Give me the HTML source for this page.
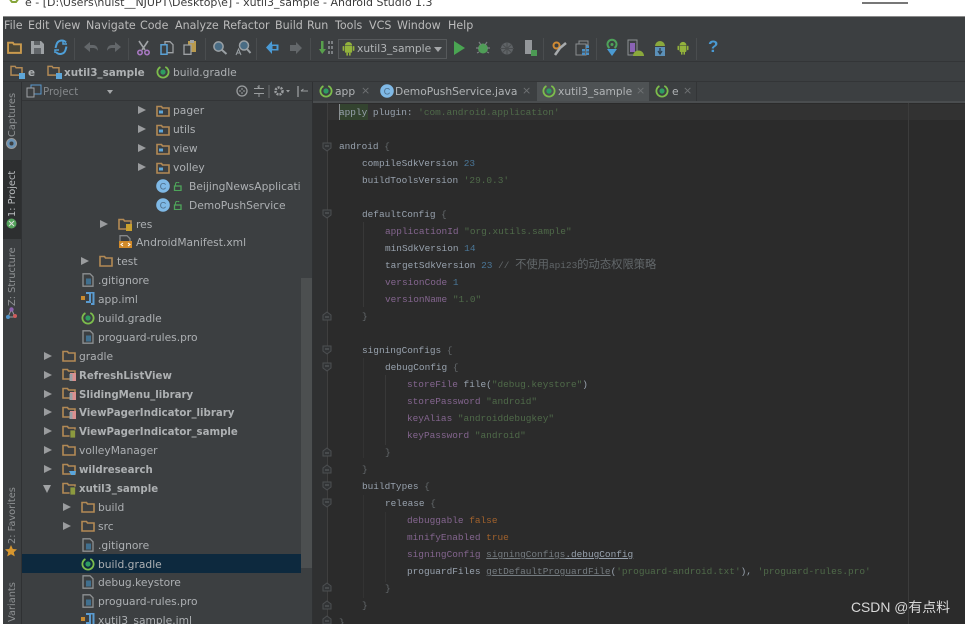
<!DOCTYPE html>
<html><head><meta charset="utf-8">
<style>
html,body{margin:0;padding:0;background:#fff;width:967px;height:624px;overflow:hidden}
#root{position:absolute;left:0;top:0;width:967px;height:624px;overflow:hidden;filter:blur(.35px);font-family:"DejaVu Sans","Noto Sans CJK SC",sans-serif}
.a{position:absolute;white-space:nowrap}
.m{top:18px;font-size:11.1px;color:#bbbbbb;line-height:16px}
.t{font-size:10.7px;color:#adb0b3;line-height:16px;margin-top:1px}
.b{font-weight:bold;font-size:10.2px;color:#aeb1b3}
.v{font-size:9.8px;color:#8f9294;transform-origin:0 0;transform:rotate(-90deg);line-height:14px}
.c{font-family:"Liberation Mono","Noto Sans CJK SC",monospace;font-size:9.43px;line-height:14px;color:#98a2ae;left:0;margin-top:1px}
.k{color:#84658f}.s{color:#4f6a49}.n{color:#4a7697}.o{color:#a0612c}.g{color:#62676a}.u{text-decoration:underline;color:#757c81}
.z{font-size:11.3px}
svg{position:absolute;overflow:visible}
.arr{width:0;height:0;border-left:8px solid #9a9c9e;border-top:4px solid transparent;border-bottom:4px solid transparent}
.x{color:#6f7274;font-size:11px;margin-top:1px}
.sep{width:1px;background:#4a4d4f;top:38px;height:22px}
</style></head><body>
<svg width="0" height="0" style="position:absolute">
<defs>
<symbol id="fo" viewBox="0 0 14 12"><path d="M1 1.5h4.5l1 1.5H13v8H1z" fill="#3c3f41" stroke="#b38a55" stroke-width="1.6"/></symbol>
<symbol id="pk" viewBox="0 0 14 12"><path d="M1 1.5h4.5l1 1.5H13v8H1z" fill="#3c3f41" stroke="#b38a55" stroke-width="1.6"/><rect x="3" y="5.5" width="4" height="3" fill="#5ea6d8"/></symbol>
<symbol id="mod" viewBox="0 0 14 13"><path d="M1 1.5h4.5l1 1.5H13v8H1z" fill="#3c3f41" stroke="#b38a55" stroke-width="1.6"/><rect x="8" y="5" width="6" height="8" fill="#d98f8f"/><rect x="7.5" y="6" width="3" height="7" fill="#9aa0a5"/></symbol>
<symbol id="and" viewBox="0 0 14 13"><path d="M1 1.5h4.5l1 1.5H13v8H1z" fill="#3c3f41" stroke="#b38a55" stroke-width="1.6"/><rect x="8" y="5" width="5.5" height="8" fill="#8c9a3f" stroke="#3c3f41" stroke-width=".8"/></symbol>
<symbol id="gr" viewBox="0 0 14 14"><circle cx="7" cy="7" r="5.6" fill="none" stroke="#7cbd4c" stroke-width="1.8" stroke-dasharray="26 5" transform="rotate(-25 7 7)"/><circle cx="7" cy="7" r="2.6" fill="#2e9c62"/></symbol>
<symbol id="cl" viewBox="0 0 14 14"><circle cx="7" cy="7" r="6.8" fill="#7fb9e6"/><text x="7" y="10.3" font-size="9" text-anchor="middle" fill="#4d6d88" font-family="Liberation Sans">C</text></symbol>
<symbol id="lock" viewBox="0 0 9 9"><rect x="1.5" y="4" width="6.5" height="4.6" fill="none" stroke="#4ea55a" stroke-width="1.3"/><path d="M2.5 4V2a2 2 0 0 1 3.6-1" fill="none" stroke="#4ea55a" stroke-width="1.1"/></symbol>
<symbol id="file" viewBox="0 0 12 14"><path d="M1 .8h7l3 3v9.4H1z" fill="#3c3f41" stroke="#8d9092" stroke-width="1.3"/><rect x="4" y="5.5" width="5" height="6" fill="#41708f"/></symbol>
<symbol id="iml" viewBox="0 0 14 13"><rect x="0" y="4" width="4" height="4" fill="#c98a2e"/><path d="M5 1h4v9H5M10 .5h2.5V12H10" fill="none" stroke="#5a9bd0" stroke-width="2"/></symbol>
<symbol id="dr" viewBox="0 0 14 14"><path d="M3.6 4.6h6.8V10a1 1 0 0 1-1 1H4.600a1 1 0 0 1-1-1zM3.600 4.100a3.400 3.200 0 0 1 6.800 0z" fill="#93b33c"/><rect x="1.500" y="4.700" width="1.500" height="4.500" rx=".7" fill="#93b33c"/><rect x="11" y="4.700" width="1.500" height="4.500" rx=".7" fill="#93b33c"/><rect x="5" y="11" width="1.500" height="2.600" fill="#93b33c"/><rect x="7.500" y="11" width="1.500" height="2.600" fill="#93b33c"/></symbol>
<symbol id="fold" viewBox="0 0 10 10"><path d="M1 1h8v5L5 9 1 6z" fill="#313335" stroke="#4c4f51" stroke-width="1"/><path d="M3 4h4" stroke="#606365" stroke-width="1"/></symbol>
<symbol id="foldu" viewBox="0 0 10 10"><path d="M1 9h8V4L5 1 1 4z" fill="#313335" stroke="#4c4f51" stroke-width="1"/><path d="M3 6h4" stroke="#606365" stroke-width="1"/></symbol>
</defs></svg>
<div id="root">
<!-- title bar -->
<div class="a" style="left:25px;top:-4px;font-size:11px;color:#3a3a3a;line-height:14px;font-family:'DejaVu Sans','Noto Sans CJK SC',sans-serif">e - [D:\Users\hulst__NJUPT\Desktop\e] - xutil3_sample - Android Studio 1.3</div>
<svg style="left:8px;top:-2px" width="12" height="7"><path d="M1 0l3 4h4l3-4" fill="none" stroke="#86a53a" stroke-width="2"/></svg>
<div class="a" style="left:862px;top:2px;width:46px;height:2px;background:#777"></div>
<!-- window -->
<div class="a" style="left:3px;top:16px;width:962px;height:608px;background:#3c3f41"></div>
<div class="a" style="left:3px;top:16px;width:962px;height:1px;background:#8a8a8a"></div>
<div class="m a" style="left:4px">File</div>
<div class="m a" style="left:28px">Edit</div>
<div class="m a" style="left:54px">View</div>
<div class="m a" style="left:86px">Navigate</div>
<div class="m a" style="left:140px">Code</div>
<div class="m a" style="left:175px">Analyze</div>
<div class="m a" style="left:223px">Refactor</div>
<div class="m a" style="left:275px">Build</div>
<div class="m a" style="left:307px">Run</div>
<div class="m a" style="left:335px">Tools</div>
<div class="m a" style="left:369px">VCS</div>
<div class="m a" style="left:397px">Window</div>
<div class="m a" style="left:448px">Help</div>
<!-- toolbar icons -->
<svg style="left:7px;top:41px" width="15" height="13" viewBox="0 0 14 12"><path d="M1 1.500h4.500l1 1.500H13v8H1z" fill="#4a4535" stroke="#c99a4e" stroke-width="1.800"/></svg>
<svg style="left:31px;top:41px" width="13" height="13"><path d="M0 0h10l3 3v10H0z" fill="#9da1a4"/><rect x="3" y="0" width="6" height="4" fill="#5f6366"/><rect x="3" y="7" width="7" height="6" fill="#62666a"/></svg>
<svg style="left:54px;top:40px" width="14" height="15" fill="none" stroke="#4e9fd8" stroke-width="2"><path d="M12 2.500a5.500 5.500 0 0 0-9.500 2L1.500 8M2 12a5.500 5.500 0 0 0 9.500-2l1-3.500"/><path d="M9 0v4h4M1 13v-3h4" stroke-width="1.500"/></svg>
<svg style="left:84px;top:42px" width="14" height="11"><path d="M6 0v3h3c3 0 5 2 5 6-1-2-3-3-5-3H6v4L0 5z" fill="#63676a"/></svg>
<svg style="left:107px;top:42px" width="14" height="11"><path d="M8 0v3H5C2 3 0 5 0 9c1-2 3-3 5-3h3v4l6-5z" fill="#63676a"/></svg>
<svg style="left:137px;top:41px" width="13" height="14" fill="none" stroke="#a0a3a6"><path d="M2 0l6 9M11 0L5 9" stroke-width="1.600"/><circle cx="3" cy="11.500" r="2.200" stroke="#a878c2" stroke-width="1.600"/><circle cx="10" cy="11.500" r="2.200" stroke="#a878c2" stroke-width="1.600"/></svg>
<svg style="left:160px;top:41px" width="14" height="14" fill="#3c3f41"><path d="M5 .7h5l3 3v8H5z" stroke="#9da0a3" stroke-width="1.300"/><path d="M1 3.700h6v9.500H1z" stroke="#5aa0d4" stroke-width="1.500"/></svg>
<svg style="left:183px;top:40px" width="14" height="15"><path d="M5 1h8v11H5z" fill="#b99a4e"/><rect x="7" y="0" width="4" height="3" fill="#a0a3a6"/><path d="M1 5h7v9.300H1z" fill="#3c3f41" stroke="#9da0a3" stroke-width="1.300"/></svg>
<svg style="left:213px;top:41px" width="14" height="14" fill="none"><circle cx="5.500" cy="5.500" r="4.600" fill="#496c84" stroke="#9aa0a4" stroke-width="1.500"/><path d="M9 9l4.500 4" stroke="#9aa0a4" stroke-width="2"/></svg>
<svg style="left:236px;top:40px" width="15" height="16" fill="none"><circle cx="8" cy="5.500" r="4.500" fill="#496c84" stroke="#9aa0a4" stroke-width="1.500"/><path d="M11 9l3.500 4" stroke="#9aa0a4" stroke-width="2"/><path d="M0 15l2.500-6 2.500 6M1 13h3" stroke="#9aa0a4"/></svg>
<svg style="left:266px;top:41px" width="13" height="13"><path d="M6 0v3.500h6.500v6H6V13L0 6.500z" fill="#4a9bd6"/><rect x="6.500" y="5" width="4" height="3" fill="#3c3f41"/></svg>
<svg style="left:290px;top:42px" width="12" height="12"><path d="M6 0v3H0v6h6v3l6-6z" fill="#63676a"/></svg>
<svg style="left:319px;top:41px" width="14" height="14"><path d="M2 0h2.500v8H7L3.200 13 0 8h2z" fill="#58a04c"/><g fill="#7b7f82"><rect x="9" y="0" width="2" height="3"/><rect x="12" y="0" width="2" height="3"/><rect x="9" y="5" width="2" height="3"/><rect x="12" y="5" width="2" height="3"/><rect x="9" y="10" width="2" height="3"/><rect x="12" y="10" width="2" height="3"/></g></svg>
<div class="a" style="left:338px;top:39px;width:109px;height:20px;border:1px solid #56595b;box-sizing:border-box;background:#3f4244"></div>
<svg style="left:341px;top:41px" width="15" height="15"><use href="#dr" width="15" height="15"/></svg>
<div class="a" style="left:357px;top:41px;font-size:10.700px;line-height:16px;color:#b2b5b7">xutil3_sample</div>
<div class="a" style="left:434px;top:47px;border-top:5px solid #a5a7a9;border-left:4.500px solid transparent;border-right:4.500px solid transparent"></div>
<svg style="left:454px;top:41px" width="11" height="14"><path d="M0 0l11 7-11 7z" fill="#4aa552"/></svg>
<svg style="left:476px;top:41px" width="15" height="14"><circle cx="7" cy="7.500" r="5" fill="#4f9d57"/><path d="M3 1l2 3M11 1L9 4M0 7h3M11 7h3M1 12l2-1M13 12l-2-1" stroke="#7b7f82" stroke-width="1.200"/></svg>
<svg style="left:500px;top:42px" width="14" height="13"><circle cx="7" cy="6.500" r="6" fill="#5f6366"/><path d="M0 6.500h14M7 0v13M2 2l10 9M12 2L2 11" stroke="#4a4d4f"/></svg>
<svg style="left:525px;top:40px" width="12" height="16"><rect x="0" y="0" width="7" height="14" fill="#94979a"/><rect x="6" y="10" width="6" height="6" fill="#4c9a54"/></svg>
<svg style="left:552px;top:41px" width="15" height="15" fill="none"><circle cx="4.500" cy="4.500" r="3" stroke="#d08a33" stroke-width="2"/><path d="M14 2l-6 5-5 7" stroke="#a8abad" stroke-width="2.500"/></svg>
<svg style="left:576px;top:41px" width="15" height="14"><rect x="3" y="0" width="9" height="4" fill="none" stroke="#8a8d90"/><rect x="0" y="3" width="10" height="11" fill="#3c3f41" stroke="#8a8d90"/><g fill="#4a90c6"><rect x="6" y="8" width="3" height="2.500"/><rect x="10" y="8" width="3" height="2.500"/><rect x="6" y="11.500" width="3" height="2.500"/><rect x="10" y="11.500" width="3" height="2.500"/><rect x="10" y="4.500" width="3" height="2.500"/></g></svg>
<svg style="left:606px;top:40px" width="12" height="16"><path d="M3.500 8a4.500 4.500 0 1 1 5 0" fill="none" stroke="#4ea25a" stroke-width="2"/><circle cx="6" cy="4.500" r="1.500" fill="#4ea25a"/><path d="M1 9h10l-5 7z" fill="#4a9ad2"/></svg>
<svg style="left:628px;top:40px" width="16" height="16"><rect x="0" y="0" width="9" height="15" fill="#3c3f41" stroke="#8d9092"/><rect x="2" y="3" width="5" height="9" fill="#8a63b5"/><path d="M5 16a4.500 4.500 0 0 1 11 0z" fill="#8aa83c"/></svg>
<svg style="left:654px;top:40px" width="12" height="16"><path d="M1 6a5 5 0 0 1 10 0z" fill="#8aa83c"/><rect x="1" y="7" width="10" height="9" fill="#5b90b8"/><path d="M6 8v5M4 11l2 3 2-3" stroke="#2d3e4c" stroke-width="1.300" fill="none"/></svg>
<svg style="left:676px;top:41px" width="14" height="14"><use href="#dr" width="14" height="14"/></svg>
<div class="a" style="left:708px;top:36px;font-size:17px;font-weight:bold;color:#4a9ad2;line-height:22px;font-family:'Liberation Sans',sans-serif">?</div>
<div class="a sep" style="left:74px"></div><div class="a sep" style="left:128px"></div><div class="a sep" style="left:205px"></div><div class="a sep" style="left:256px"></div><div class="a sep" style="left:310px"></div><div class="a sep" style="left:543px"></div><div class="a sep" style="left:596px"></div><div class="a sep" style="left:696px"></div>
<!-- breadcrumb -->
<div class="a" style="left:3px;top:61px;width:962px;height:1px;background:#333537"></div>
<div class="a" style="left:3px;top:81px;width:962px;height:1px;background:#333537"></div>
<svg style="left:10px;top:65px" width="15" height="14"><use href="#fo" width="13" height="11"/><rect x="9" y="8" width="6" height="6" fill="#5ea6d8"/></svg>
<div class="a b" style="left:28px;top:65px;line-height:16px;font-size:10.400px">e</div>
<svg style="left:47px;top:65px" width="15" height="14"><use href="#fo" width="13" height="11"/><rect x="9" y="8" width="6" height="6" fill="#5ea6d8"/></svg>
<div class="a b" style="left:64px;top:65px;line-height:16px;font-size:10.400px">xutil3_sample</div>
<svg style="left:156px;top:65px" width="14" height="14"><use href="#gr" width="14" height="14"/></svg>
<div class="a t" style="left:173px;top:64px">build.gradle</div>
<!-- left stripe -->
<div class="a" style="left:21px;top:82px;width:1px;height:542px;background:#2f3133"></div>
<div class="a" style="left:3px;top:160px;width:18px;height:79px;background:#2d2f30"></div>
<div class="a v" style="left:6px;top:137px">Captures</div>
<div class="a v" style="left:6px;top:217px;color:#b8bbbd">1: Project</div>
<div class="a v" style="left:6px;top:306px">Z: Structure</div>
<div class="a v" style="left:6px;top:544px">2: Favorites</div>
<div class="a v" style="left:6px;top:622px">Variants</div>
<svg style="left:6px;top:138px" width="11" height="11"><circle cx="5.500" cy="5.500" r="5" fill="#6a93b5" stroke="#999"/><circle cx="5.500" cy="5.500" r="2" fill="#3c3f41"/></svg>
<svg style="left:6px;top:218px" width="11" height="11"><circle cx="5.500" cy="5.500" r="5" fill="#55a35c"/><path d="M3 3l5 5M8 3L3 8" stroke="#ddd"/></svg>
<svg style="left:6px;top:307px" width="11" height="13"><path d="M5.500 2L2 10h7z" fill="none" stroke="#9a9d9f"/><circle cx="5.500" cy="2.500" r="2.200" fill="#8b63ad"/><circle cx="2" cy="10" r="2" fill="#4f93c9"/><circle cx="9" cy="9" r="2" fill="#cc5c5c"/></svg>
<svg style="left:5px;top:545px" width="12" height="12"><path d="M6 0l1.800 4 4.200.4-3.200 2.800 1 4.200L6 9.200 2.200 11.400l1-4.200L0 4.400 4.200 4z" fill="#d8972f"/></svg>
<!-- project panel -->
<div class="a" style="left:22px;top:82px;width:291px;height:18px;background:#3c3f41"></div>
<div class="a" style="left:22px;top:100px;width:291px;height:1px;background:#333537"></div>
<svg style="left:27px;top:85px" width="14" height="13"><rect x="4" y="0" width="10" height="9" fill="#3c3f41" stroke="#5a9ad0"/><rect x="0" y="3" width="7" height="9" fill="#3c3f41" stroke="#a0a3a6"/></svg>
<div class="a" style="left:43px;top:84px;font-size:10.300px;line-height:16px;color:#85888b">Project</div>
<div class="a" style="left:107px;top:90px;border-top:4px solid #a5a7a9;border-left:3.500px solid transparent;border-right:3.500px solid transparent"></div>
<svg style="left:236px;top:85px" width="76" height="13" fill="none" stroke="#9a9d9f"><circle cx="6" cy="6" r="5" stroke-width="1.300"/><path d="M6 3v6M3 6h6" stroke-dasharray="2 2"/><path d="M18 3.500h10M18 8.500h10M23 0v3l-1.500-1.500M23 12V9" /><path d="M33 0v13" stroke="#6a6d70"/><circle cx="43" cy="6" r="3.500" stroke-width="2.500" stroke-dasharray="2 1"/><path d="M50 5h4l-2 2.500z" fill="#9a9d9f" stroke="none"/><path d="M62 1v11" stroke-width="1.300"/><path d="M65 6h7M65 6l2.500-2" /></svg>
<!-- selected row -->
<div class="a" style="left:22px;top:554px;width:279px;height:19px;background:#0d293e"></div>
<!-- tree -->
<div class="a arr" style="left:138px;top:106px"></div><svg style="left:156px;top:105px" width="14" height="12"><use href="#pk"/></svg><div class="a t" style="left:173px;top:102px">pager</div>
<div class="a arr" style="left:138px;top:125px"></div><svg style="left:156px;top:124px" width="14" height="12"><use href="#pk"/></svg><div class="a t" style="left:173px;top:121px">utils</div>
<div class="a arr" style="left:138px;top:144px"></div><svg style="left:156px;top:143px" width="14" height="12"><use href="#pk"/></svg><div class="a t" style="left:173px;top:140px">view</div>
<div class="a arr" style="left:138px;top:163px"></div><svg style="left:156px;top:162px" width="14" height="12"><use href="#pk"/></svg><div class="a t" style="left:173px;top:159px">volley</div>
<svg style="left:156px;top:179px" width="14" height="14"><use href="#cl"/></svg><svg style="left:173px;top:182px" width="9" height="9"><use href="#lock"/></svg>
<div class="a t" style="left:189px;top:178px;width:112px;overflow:hidden">BeijingNewsApplication</div>
<svg style="left:156px;top:198px" width="14" height="14"><use href="#cl"/></svg><svg style="left:173px;top:201px" width="9" height="9"><use href="#lock"/></svg>
<div class="a t" style="left:189px;top:197px">DemoPushService</div>
<div class="a arr" style="left:100px;top:220px"></div><svg style="left:118px;top:218px" width="15" height="13"><use href="#fo" width="14" height="12"/><rect x="8" y="6" width="6" height="7" fill="#c9a02e"/></svg><div class="a t" style="left:136px;top:216px">res</div>
<svg style="left:119px;top:235px" width="14" height="14"><path d="M1 .7h7l3 3v3H1z" fill="#3c3f41" stroke="#85888a" stroke-width="1.300"/><rect x="0" y="6" width="13" height="7" fill="#d18a2a"/><path d="M4 8l-2 1.500L4 11M9 8l2 1.500L9 11" stroke="#fff" fill="none"/></svg><div class="a t" style="left:136px;top:234px">AndroidManifest.xml</div>
<div class="a arr" style="left:81px;top:257px"></div><svg style="left:99px;top:255px" width="14" height="12"><use href="#fo"/></svg><div class="a t" style="left:117px;top:253px">test</div>
<svg style="left:82px;top:273px" width="12" height="14"><use href="#file"/></svg><div class="a t" style="left:98px;top:272px">.gitignore</div>
<svg style="left:81px;top:292px" width="14" height="13"><use href="#iml"/></svg><div class="a t" style="left:98px;top:291px">app.iml</div>
<svg style="left:81px;top:311px" width="14" height="14"><use href="#gr"/></svg><div class="a t" style="left:98px;top:310px">build.gradle</div>
<svg style="left:82px;top:330px" width="12" height="14"><use href="#file"/></svg><div class="a t" style="left:98px;top:329px">proguard-rules.pro</div>
<div class="a arr" style="left:44px;top:352px"></div><svg style="left:62px;top:350px" width="14" height="12"><use href="#fo"/></svg><div class="a t" style="left:79px;top:348px">gradle</div>
<div class="a arr" style="left:44px;top:371px"></div><svg style="left:62px;top:368px" width="14" height="13"><use href="#mod"/></svg><div class="a t b" style="left:79px;top:368px">RefreshListView</div>
<div class="a arr" style="left:44px;top:390px"></div><svg style="left:62px;top:387px" width="14" height="13"><use href="#mod"/></svg><div class="a t b" style="left:79px;top:387px">SlidingMenu_library</div>
<div class="a arr" style="left:44px;top:408px"></div><svg style="left:62px;top:406px" width="14" height="13"><use href="#mod"/></svg><div class="a t b" style="left:79px;top:405px">ViewPagerIndicator_library</div>
<div class="a arr" style="left:44px;top:427px"></div><svg style="left:62px;top:425px" width="14" height="13"><use href="#and"/></svg><div class="a t b" style="left:79px;top:424px">ViewPagerIndicator_sample</div>
<div class="a arr" style="left:44px;top:446px"></div><svg style="left:62px;top:444px" width="14" height="12"><use href="#fo"/></svg><div class="a t" style="left:79px;top:442px">volleyManager</div>
<div class="a arr" style="left:44px;top:465px"></div><svg style="left:62px;top:463px" width="15" height="13"><use href="#fo" width="14" height="12"/><path d="M7 8h7l-1 4H9z" fill="#5aa5dc"/></svg><div class="a t b" style="left:79px;top:462px">wildresearch</div>
<div class="a" style="left:43px;top:485px;border-top:8px solid #a0a2a4;border-left:4.500px solid transparent;border-right:4.500px solid transparent"></div><svg style="left:62px;top:482px" width="14" height="13"><use href="#and"/></svg><div class="a t b" style="left:79px;top:481px">xutil3_sample</div>
<div class="a arr" style="left:63px;top:503px"></div><svg style="left:81px;top:501px" width="14" height="12"><use href="#fo"/></svg><div class="a t" style="left:98px;top:499px">build</div>
<div class="a arr" style="left:63px;top:522px"></div><svg style="left:81px;top:520px" width="14" height="12"><use href="#fo"/></svg><div class="a t" style="left:98px;top:518px">src</div>
<svg style="left:82px;top:538px" width="12" height="14"><use href="#file"/></svg><div class="a t" style="left:98px;top:537px">.gitignore</div>
<svg style="left:81px;top:557px" width="14" height="14"><use href="#gr"/></svg><div class="a t" style="left:98px;top:556px">build.gradle</div>
<svg style="left:82px;top:575px" width="12" height="14"><use href="#file"/></svg><div class="a t" style="left:98px;top:574px">debug.keystore</div>
<svg style="left:82px;top:594px" width="12" height="14"><use href="#file"/></svg><div class="a t" style="left:98px;top:593px">proguard-rules.pro</div>
<svg style="left:81px;top:613px" width="14" height="13"><use href="#iml"/></svg><div class="a t" style="left:98px;top:612px">xutil3_sample.iml</div>
<!-- panel scrollbar -->
<div class="a" style="left:301px;top:278px;width:11px;height:290px;background:#4c4f50"></div>
<div class="a" style="left:312px;top:82px;width:1px;height:542px;background:#2f3133"></div>
<!-- tabs -->
<div class="a" style="left:313px;top:82px;width:652px;height:19px;background:#3c3f41"></div>
<div class="a" style="left:537px;top:82px;width:112px;height:19px;background:#4e5254"></div>
<div class="a" style="left:313px;top:101px;width:652px;height:2px;background:#4a4d4f"></div>
<svg style="left:319px;top:84px" width="14" height="14"><use href="#gr"/></svg><div class="a t" style="left:335px;top:83px;color:#b0b3b5">app</div><div class="a x" style="left:361px;top:83px">×</div>
<svg style="left:380px;top:84px" width="14" height="14"><use href="#cl"/></svg><div class="a t" style="left:395px;top:83px;color:#b0b3b5">DemoPushService.java</div><div class="a x" style="left:522px;top:83px">×</div>
<svg style="left:542px;top:84px" width="14" height="14"><use href="#gr"/></svg><div class="a t" style="left:558px;top:83px;color:#b0b3b5">xutil3_sample</div><div class="a x" style="left:636px;top:83px">×</div>
<svg style="left:655px;top:84px" width="14" height="14"><use href="#gr"/></svg><div class="a t" style="left:672px;top:83px;color:#b0b3b5">e</div><div class="a x" style="left:683px;top:83px">×</div>
<div class="a" style="left:696px;top:82px;width:1px;height:19px;background:#333537"></div>
<!-- editor -->
<div class="a" style="left:313px;top:103px;width:652px;height:521px;background:#2b2b2b"></div>
<div class="a" style="left:313px;top:103px;width:14px;height:521px;background:#2f3031"></div>
<div class="a" style="left:327px;top:103px;width:1px;height:521px;background:#3f3f3f"></div>
<div class="a" style="left:328px;top:104px;width:637px;height:16px;background:#323232"></div>
<div class="a" style="left:339px;top:104px;width:29px;height:16px;background:#33432f"></div>
<div class="a" style="left:339px;top:104px;width:1px;height:16px;background:#8a8f90"></div>
<div class="a" style="left:908px;top:103px;width:1px;height:521px;background:#3c3c3c"></div>
<div class="a" style="left:363px;top:222px;width:1px;height:85px;background:#383838"></div>
<div class="a" style="left:385px;top:375px;width:1px;height:70px;background:#383838"></div>
<div class="a" style="left:363px;top:358px;width:1px;height:100px;background:#333"></div>
<div class="a" style="left:363px;top:495px;width:1px;height:103px;background:#333"></div>
<div class="a" style="left:385px;top:512px;width:1px;height:70px;background:#333"></div>
<svg style="left:322px;top:142px" width="10" height="10"><use href="#fold"/></svg>
<svg style="left:322px;top:209px" width="10" height="10"><use href="#fold"/></svg>
<svg style="left:322px;top:311px" width="10" height="10"><use href="#foldu"/></svg>
<svg style="left:322px;top:345px" width="10" height="10"><use href="#fold"/></svg>
<svg style="left:322px;top:362px" width="10" height="10"><use href="#fold"/></svg>
<svg style="left:322px;top:447px" width="10" height="10"><use href="#foldu"/></svg>
<svg style="left:322px;top:464px" width="10" height="10"><use href="#foldu"/></svg>
<svg style="left:322px;top:481px" width="10" height="10"><use href="#fold"/></svg>
<svg style="left:322px;top:498px" width="10" height="10"><use href="#fold"/></svg>
<svg style="left:322px;top:582px" width="10" height="10"><use href="#foldu"/></svg>
<svg style="left:322px;top:600px" width="10" height="10"><use href="#foldu"/></svg>
<svg style="left:322px;top:615px" width="10" height="10"><use href="#foldu"/></svg>
<div class="a c" style="left:339px;top:105px">apply plugin: <span class="s">'com.android.application'</span></div>
<div class="a c" style="left:339px;top:139px">android <span class="g">{</span></div>
<div class="a c" style="left:362px;top:156px">compileSdkVersion <span class="n">23</span></div>
<div class="a c" style="left:362px;top:173px">buildToolsVersion <span class="s">'29.0.3'</span></div>
<div class="a c" style="left:362px;top:207px">defaultConfig <span class="g">{</span></div>
<div class="a c" style="left:385px;top:224px"><span class="k">applicationId</span> <span class="s">"org.xutils.sample"</span></div>
<div class="a c" style="left:385px;top:241px">minSdkVersion <span class="n">14</span></div>
<div class="a c" style="left:385px;top:258px">targetSdkVersion <span class="n">23</span> <span class="g">// <span class="z">不使用</span>api23<span class="z">的动态权限策略</span></span></div>
<div class="a c" style="left:385px;top:275px"><span class="k">versionCode</span> <span class="n">1</span></div>
<div class="a c" style="left:385px;top:292px"><span class="k">versionName</span> <span class="s">"1.0"</span></div>
<div class="a c g" style="left:362px;top:309px;color:#62676a">}</div>
<div class="a c" style="left:362px;top:343px">signingConfigs <span class="g">{</span></div>
<div class="a c" style="left:385px;top:360px">debugConfig <span class="g">{</span></div>
<div class="a c" style="left:407px;top:377px"><span class="k">storeFile</span> file(<span class="s">"debug.keystore"</span>)</div>
<div class="a c" style="left:407px;top:394px"><span class="k">storePassword</span> <span class="s">"android"</span></div>
<div class="a c" style="left:407px;top:411px"><span class="k">keyAlias</span> <span class="s">"androiddebugkey"</span></div>
<div class="a c" style="left:407px;top:428px"><span class="k">keyPassword</span> <span class="s">"android"</span></div>
<div class="a c" style="left:385px;top:445px;color:#62676a">}</div>
<div class="a c" style="left:362px;top:462px;color:#62676a">}</div>
<div class="a c" style="left:362px;top:479px">buildTypes <span class="g">{</span></div>
<div class="a c" style="left:385px;top:496px">release <span class="g">{</span></div>
<div class="a c" style="left:407px;top:513px"><span class="k">debuggable</span> <span class="o">false</span></div>
<div class="a c" style="left:407px;top:530px"><span class="k">minifyEnabled</span> <span class="o">true</span></div>
<div class="a c" style="left:407px;top:547px"><span class="k">signingConfig</span> <span class="u">signingConfigs</span><span class="u" style="color:#98a2ae">.debugConfig</span></div>
<div class="a c" style="left:407px;top:564px">proguardFiles <span class="u">getDefaultProguardFile</span>(<span class="s">'proguard-android.txt'</span>), <span class="s">'proguard-rules.pro'</span></div>
<div class="a c" style="left:385px;top:581px;color:#62676a">}</div>
<div class="a c" style="left:362px;top:598px;color:#62676a">}</div>
<div class="a c" style="left:339px;top:615px;color:#62676a">}</div>
<!-- watermark -->
<div class="a" style="left:851px;top:598px;font-size:13.900px;line-height:18px;color:#d8d8d8;font-family:'Liberation Sans','Noto Sans CJK SC',sans-serif">CSDN @有点料</div>
</div>
</body></html>
